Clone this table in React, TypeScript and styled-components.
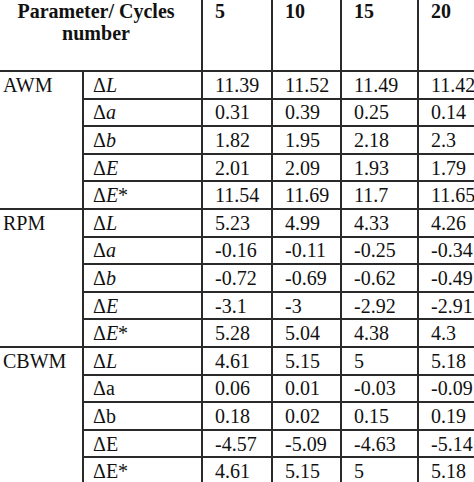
import React, { FunctionComponent, Fragment } from 'react'
import styled, { createGlobalStyle, css } from 'styled-components'

const GlobalStyle = createGlobalStyle`
    html, body {
        margin: 0;
        padding: 0;
        background: #ffffff;
        overflow: hidden;
        font-family: "Liberation Serif", "Times New Roman", serif;
    }
`

const cellFont = css`
    font-family: "Liberation Serif", "Times New Roman", serif;
    font-size: 20px;
    color: #111111;
`

const Page = styled.div`
    width: 474px;
    height: 482px;
    overflow: hidden;
    background: #ffffff;
`

const Table = styled.table`
    margin-left: -11px;
    margin-top: -1px;
    border-collapse: collapse;
    table-layout: fixed;
    width: 505px;
    ${cellFont}
`

const HeadRow = styled.tr`
    height: 72px;
`

const Row = styled.tr`
    height: 27.6px;
`

const HeadCell = styled.th<{ center?: boolean }>`
    ${cellFont}
    border: 2px solid #2a2a2a;
    border-top: none;
    padding: 1px 12px 0 12px;
    vertical-align: top;
    text-align: ${props => props.center ? 'center' : 'left'};
    font-weight: bold;
    line-height: 22px;
`

const GroupCell = styled.td`
    ${cellFont}
    border: 2px solid #2a2a2a;
    border-left: none;
    padding: 2px 12px 0 13px;
    vertical-align: top;
    line-height: 23px;
`

const Cell = styled.td<{ param?: boolean }>`
    ${cellFont}
    border: 2px solid #2a2a2a;
    padding: 0 4px 0 ${props => props.param ? '9px' : '12px'};
    vertical-align: middle;
    white-space: nowrap;
    overflow: hidden;
    line-height: 22px;
`

const Var = styled.i`
    font-style: italic;
`

interface IGroup {
    name: string
    italic: boolean[]
    rows: string[][]
}

const groups: IGroup[] = [
    {
        name: 'AWM',
        italic: [true, true, true, true, true],
        rows: [
            ['11.39', '11.52', '11.49', '11.42'],
            ['0.31', '0.39', '0.25', '0.14'],
            ['1.82', '1.95', '2.18', '2.3'],
            ['2.01', '2.09', '1.93', '1.79'],
            ['11.54', '11.69', '11.7', '11.65'],
        ],
    },
    {
        name: 'RPM',
        italic: [true, true, true, true, true],
        rows: [
            ['5.23', '4.99', '4.33', '4.26'],
            ['-0.16', '-0.11', '-0.25', '-0.34'],
            ['-0.72', '-0.69', '-0.62', '-0.49'],
            ['-3.1', '-3', '-2.92', '-2.91'],
            ['5.28', '5.04', '4.38', '4.3'],
        ],
    },
    {
        name: 'CBWM',
        italic: [true, false, false, false, false],
        rows: [
            ['4.61', '5.15', '5', '5.18'],
            ['0.06', '0.01', '-0.03', '-0.09'],
            ['0.18', '0.02', '0.15', '0.19'],
            ['-4.57', '-5.09', '-4.63', '-5.14'],
            ['4.61', '5.15', '5', '5.18'],
        ],
    },
]

const params = [
    { sym: 'L', star: '' },
    { sym: 'a', star: '' },
    { sym: 'b', star: '' },
    { sym: 'E', star: '' },
    { sym: 'E', star: '*' },
]

const Param: FunctionComponent<{ index: number, italic: boolean }> = ({ index, italic }) => {
    const p = params[index]
    return (
        <Fragment>
            Δ{italic ? <Var>{p.sym}</Var> : p.sym}{p.star}
        </Fragment>
    )
}

const App: FunctionComponent = () => {
    return (
        <Page>
            <GlobalStyle />
            <Table>
                <colgroup>
                    <col style={{ width: 93 }} />
                    <col style={{ width: 119 }} />
                    <col style={{ width: 70 }} />
                    <col style={{ width: 69 }} />
                    <col style={{ width: 77 }} />
                    <col style={{ width: 77 }} />
                </colgroup>
                <thead>
                    <HeadRow>
                        <HeadCell colSpan={2} center>Parameter/ Cycles<br />number</HeadCell>
                        <HeadCell>5</HeadCell>
                        <HeadCell>10</HeadCell>
                        <HeadCell>15</HeadCell>
                        <HeadCell>20</HeadCell>
                    </HeadRow>
                </thead>
                <tbody>
                    {groups.map(group => group.rows.map((values, i) => (
                        <Row key={group.name + i}>
                            {i === 0 && <GroupCell rowSpan={5}>{group.name}</GroupCell>}
                            <Cell param><Param index={i} italic={group.italic[i]} /></Cell>
                            {values.map((v, j) => <Cell key={j}>{v}</Cell>)}
                        </Row>
                    )))}
                </tbody>
            </Table>
        </Page>
    )
}

export default App
